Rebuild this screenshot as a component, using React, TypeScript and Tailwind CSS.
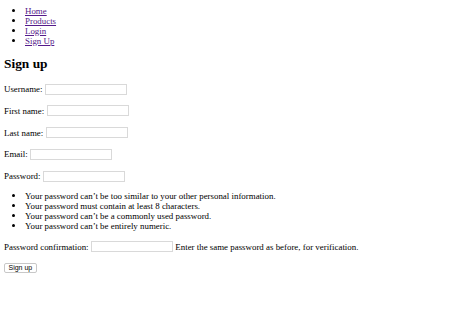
const navLinks = ['Home', 'Products', 'Login', 'Sign Up'];

const fields = [
  { id: 'username', label: 'Username:' },
  { id: 'first_name', label: 'First name:' },
  { id: 'last_name', label: 'Last name:' },
  { id: 'email', label: 'Email:' },
  { id: 'password1', label: 'Password:' },
];

const passwordHelp = [
  'Your password can’t be too similar to your other personal information.',
  'Your password must contain at least 8 characters.',
  'Your password can’t be a commonly used password.',
  'Your password can’t be entirely numeric.',
];

function TextInput({ id, type = 'text' }: { id: string; type?: string }) {
  return (
    <input
      id={id}
      name={id}
      type={type}
      className="w-[82px] h-[11px] border border-[#d9d9d9] bg-white shrink-0 outline-none"
    />
  );
}

export default function App() {
  return (
    <div className="min-h-screen bg-white px-[4px] pt-[5.5px] text-black font-['Liberation_Serif',serif] text-[8.9px] leading-[10px]">
      {/* Nav */}
      <ul className="list-disc pl-[21px] marker:text-[10px]">
        {navLinks.map((link) => (
          <li key={link}>
            <a href="#" className="text-[#551a8b] underline">
              {link}
            </a>
          </li>
        ))}
      </ul>

      <h2 className="mt-[10.8px] mb-[11px] text-[13.4px] leading-[15.2px] font-bold">Sign up</h2>

      <form>
        {fields.map((field) => (
          <p key={field.id} className="flex items-center gap-[2.4px] h-[13px] my-[8.8px]">
            <label htmlFor={field.id}>{field.label}</label>
            <TextInput
              id={field.id}
              type={field.id.startsWith('password') ? 'password' : field.id === 'email' ? 'email' : 'text'}
            />
          </p>
        ))}

        <ul className="list-disc pl-[21px] my-[8.8px] marker:text-[10px]">
          {passwordHelp.map((text) => (
            <li key={text}>{text}</li>
          ))}
        </ul>

        <p className="flex items-center gap-[2.4px] h-[13px] my-[8.8px]">
          <label htmlFor="password2">Password confirmation:</label>
          <TextInput id="password2" type="password" />
          <span>Enter the same password as before, for verification.</span>
        </p>

        <button
          type="submit"
          className="h-[10px] px-[3.5px] border border-[#c8c8c8] rounded-[2px] bg-white font-['Liberation_Sans',sans-serif] text-[7px] leading-[8px]"
        >
          Sign up
        </button>
      </form>
    </div>
  );
}
